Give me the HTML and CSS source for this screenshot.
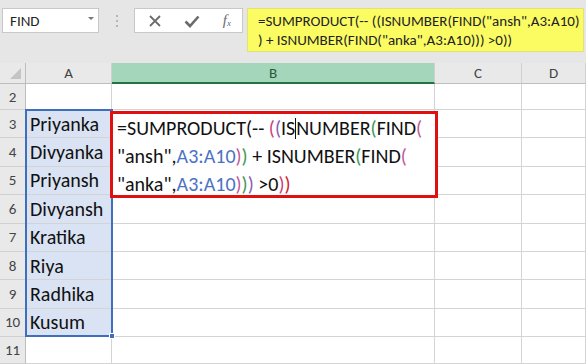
FILE: index.html
```html
<!DOCTYPE html>
<html>
<head>
<meta charset="utf-8">
<link rel="stylesheet" href="styles.css">
</head>
<body>
<div class="app">
  <div class="topbar">
    <div class="namebox"><span>FIND</span><span class="caret"></span></div>
    <div class="grip"><i></i><i></i><i></i></div>
    <div class="fxbox">
      <svg class="ico" width="14" height="14" viewBox="0 0 14 14"><path d="M2 2 L12 12 M12 2 L2 12" stroke="#6b6b6b" stroke-width="1.8" fill="none"/></svg>
      <svg class="ico" width="16" height="14" viewBox="0 0 16 14"><path d="M1.5 7.5 L6 12 L14.5 2.5" stroke="#6b6b6b" stroke-width="2.6" fill="none"/></svg>
      <span class="fx">f<sub>x</sub></span>
    </div>
    <div class="formula">=SUMPRODUCT(-- ((ISNUMBER(FIND("ansh",A3:A10)<br>) + ISNUMBER(FIND("anka",A3:A10))) &gt;0))</div>
  </div>
  <div class="sheet">
    <div class="corner"><span class="tri"></span></div>
    <div class="ch">A</div>
    <div class="ch sel">B</div>
    <div class="ch">C</div>
    <div class="ch last">D</div>

    <div class="rh">2</div><div class="c a"></div><div class="c"></div><div class="c"></div><div class="c"></div>
    <div class="rh">3</div><div class="c a s">Priyanka</div><div class="c"></div><div class="c"></div><div class="c"></div>
    <div class="rh">4</div><div class="c a s">Divyanka</div><div class="c"></div><div class="c"></div><div class="c"></div>
    <div class="rh">5</div><div class="c a s">Priyansh</div><div class="c"></div><div class="c"></div><div class="c"></div>
    <div class="rh">6</div><div class="c a s">Divyansh</div><div class="c"></div><div class="c"></div><div class="c"></div>
    <div class="rh">7</div><div class="c a s">Kratika</div><div class="c"></div><div class="c"></div><div class="c"></div>
    <div class="rh">8</div><div class="c a s">Riya</div><div class="c"></div><div class="c"></div><div class="c"></div>
    <div class="rh">9</div><div class="c a s">Radhika</div><div class="c"></div><div class="c"></div><div class="c"></div>
    <div class="rh">10</div><div class="c a s">Kusum</div><div class="c"></div><div class="c"></div><div class="c"></div>
    <div class="rh">11</div><div class="c a"></div><div class="c"></div><div class="c"></div><div class="c"></div>

    <div class="selection"><span class="handle"></span></div>
    <div class="editor"><span class="k">=SUMPRODUCT(-- </span><span class="p2">(</span><span class="p3">(</span>IS<span class="cursor"></span>NUMBER<span class="p4">(</span>FIND<span class="p5">(</span><br>"ansh",<span class="ref">A3:A10</span><span class="p5">)</span><span class="p4">)</span> + ISNUMBER<span class="p4">(</span>FIND<span class="p5">(</span><br>"anka",<span class="ref">A3:A10</span><span class="p5">)</span><span class="p4">)</span><span class="p3">)</span> &gt;0<span class="p2">)</span><span class="p1">)</span></div>
  </div>
</div>
</body>
</html>
```
FILE: styles.css
```css
* { box-sizing: border-box; }
html, body { margin: 0; padding: 0; }
body {
  width: 586px;
  height: 364px;
  overflow: hidden;
  background: #e6e6e6;
  font-family: "Carlito", "Lato", "Liberation Sans", sans-serif;
  color: #111;
}
.app { width: 586px; height: 364px; display: flex; flex-direction: column; }

.topbar {
  height: 63px;
  flex: none;
  display: flex;
  align-items: flex-start;
  padding: 8px 0 0 2px;
  background: #e6e6e6;
}
.namebox {
  width: 97px;
  height: 25px;
  background: #fff;
  border: 1px solid #c8c8c8;
  display: flex;
  align-items: center;
  justify-content: space-between;
  padding: 0 4px 0 7px;
  font-size: 15px;
  color: #222;
}
.caret {
  width: 0; height: 0;
  border-left: 3px solid transparent;
  border-right: 3px solid transparent;
  border-top: 3px solid #777;
  margin-right: 0px;
  margin-top: -4px;
}
.grip {
  width: 35px;
  height: 25px;
  display: flex;
  flex-direction: column;
  align-items: center;
  justify-content: center;
  gap: 3px;
}
.grip i { display: block; width: 2px; height: 2px; background: #b5b5b5; }
.fxbox {
  width: 109px;
  height: 25px;
  background: #fff;
  border: 1px solid #c8c8c8;
  display: flex;
  align-items: center;
  justify-content: space-between;
  padding: 0 11px 0 13px;
}
.fx {
  font-family: "Liberation Serif", serif;
  font-style: italic;
  font-size: 15px;
  color: #6b6b6b;
  line-height: 1;
}
.fx sub { font-size: 9px; vertical-align: -1px; }
.formula {
  margin-left: 4px;
  width: 337px;
  height: 44px;
  background: #fbfb62;
  border: 1px solid #e2e27a;
  padding: 3px 0 0 10px;
  font-size: 15px;
  line-height: 19px;
  color: #222;
  white-space: nowrap;
}

.sheet {
  position: relative;
  flex: 1;
  display: grid;
  grid-template-columns: 26px 86px 323px 87px 64px;
  grid-template-rows: 21px 26px repeat(8, 28.375px) 1fr;
  background: #fff;
}
.corner, .ch, .rh {
  background: #e9e9e9;
  color: #444;
  font-size: 15px;
}
.corner {
  border-right: 1px solid #bdbdbd;
  border-bottom: 1px solid #bdbdbd;
  position: relative;
}
.tri {
  position: absolute;
  right: 4px;
  bottom: 4px;
  width: 0; height: 0;
  border-left: 11px solid transparent;
  border-bottom: 11px solid #c4c4c4;
}
.ch {
  display: flex;
  align-items: center;
  justify-content: center;
  border-right: 1px solid #d0d0d0;
  border-bottom: 1px solid #bdbdbd;
}
.ch.sel {
  background: #a3d6ba;
  border-bottom: 2px solid #217346;
  color: #2a5a3a;
}
.rh {
  display: flex;
  align-items: center;
  justify-content: center;
  border-right: 1px solid #bdbdbd;
  border-bottom: 1px solid #d0d0d0;
  font-size: 15px;
}
.c {
  border-right: 1px solid #d4d4d4;
  border-bottom: 1px solid #d4d4d4;
  font-size: 20px;
  display: flex;
  align-items: center;
  padding-left: 4px;
  white-space: nowrap;
  color: #111;
}
.c.s { background: #dae3f3; }

.selection {
  position: absolute;
  left: 25px;
  top: 46px;
  width: 88px;
  height: 228px;
  border: 2px solid #3e6fbd;
  border-left-width: 2px;
  pointer-events: none;
}
.handle {
  position: absolute;
  right: -4px;
  bottom: -4px;
  width: 6px;
  height: 6px;
  background: #3e6fbd;
  border: 1px solid #fff;
}
.editor {
  position: absolute;
  left: 110px;
  top: 48px;
  width: 328px;
  height: 87px;
  background: #fff;
  border: 3px solid #e01010;
  padding: 0 0 0 4px;
  font-size: 20px;
  line-height: 28px;
  white-space: nowrap;
  color: #111;
  overflow: hidden;
}
.ref { color: #4a72c4; }
.p1 { color: #d01c2c; }
.p2 { color: #d0407a; }
.p3 { color: #8a5cb4; }
.p4 { color: #3d9a52; }
.p5 { color: #c2589c; }
.cursor {
  display: inline-block;
  width: 1px;
  height: 21px;
  background: #111;
  vertical-align: -4px;
  margin: 0 0 0 0;
}
```
